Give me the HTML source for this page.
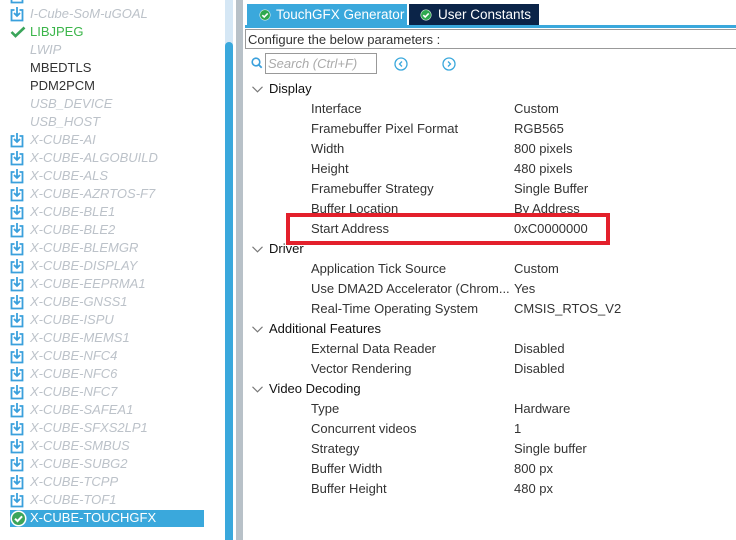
<!DOCTYPE html>
<html><head><meta charset="utf-8"><style>
*{margin:0;padding:0;box-sizing:border-box}
body{width:736px;height:540px;overflow:hidden;background:#fff;font-family:"Liberation Sans",Arial,sans-serif;font-size:13px;position:relative}
.l{position:absolute;left:0;top:0;width:225px;height:540px;background:#fff}
.it{position:absolute;left:30px;height:18px;line-height:18px;white-space:nowrap}
.g{color:#bcc2c9;font-style:italic}
.k{color:#333}
.ic{position:absolute;left:10px;width:14px;height:16px}
.track{position:absolute;left:225px;top:0;width:8px;height:540px;background:#d5e7f5}
.thumb{position:absolute;left:225px;top:42px;width:8px;height:498px;background:#3aa8dc;border-radius:4px 4px 0 0}
.gs{position:absolute;left:236px;top:0;width:7px;height:540px;background:#b8c1c8}
.t{position:absolute;white-space:nowrap;color:#333;height:20px;line-height:20px}
</style></head><body>
<div class="l">
<svg width="0" height="0" style="position:absolute"><defs><symbol id="dl" viewBox="0 0 14 16"><path d="M4.5 4H1.5v10.5h11V4h-3" fill="none" stroke="#3aa0dc" stroke-width="1.8"/><path d="M7 1v9M4 7l3 3 3-3" fill="none" stroke="#3aa0dc" stroke-width="1.8"/></symbol></defs></svg>
<div id="list"></div>
</div>
<div class="track"></div><div class="thumb"></div><div class="gs"></div>

<div style="position:absolute;left:247px;top:4px;width:160px;height:21px;background:#3aa8dc;color:#fff;font-size:13.5px;line-height:21px;padding-left:29px;white-space:nowrap;overflow:hidden">TouchGFX Generator</div>
<div style="position:absolute;left:409px;top:4px;width:130px;height:21px;background:#0b2448;color:#fff;font-size:13.5px;line-height:21px;padding-left:29px;white-space:nowrap;overflow:hidden">User Constants</div>
<svg style="position:absolute;left:259px;top:9px" width="12" height="12"><circle cx="6" cy="6" r="5.5" fill="#e4f3e8"/><circle cx="6" cy="6" r="5" fill="#2ea84f"/><path d="M3.3 6.2l1.9 1.8 3.5-3.6" stroke="#fff" stroke-width="1.6" fill="none"/></svg>
<svg style="position:absolute;left:420px;top:9px" width="12" height="12"><circle cx="6" cy="6" r="5.5" fill="#e4f3e8"/><circle cx="6" cy="6" r="5" fill="#2ea84f"/><path d="M3.3 6.2l1.9 1.8 3.5-3.6" stroke="#fff" stroke-width="1.6" fill="none"/></svg>
<div style="position:absolute;left:245px;top:25px;width:491px;height:3px;background:#3aa8dc"></div>
<div style="position:absolute;left:245px;top:29px;width:491px;height:20px;border-top:1px solid #999;border-bottom:1px solid #999;border-left:1px solid #999"></div>
<div class="t" style="left:248px;top:30px;color:#333;height:19px;line-height:19px">Configure the below parameters :</div>

<svg style="position:absolute;left:251px;top:57px" width="12" height="12"><circle cx="5" cy="5" r="3.8" fill="none" stroke="#3aa0dc" stroke-width="1.6"/><path d="M7.7 7.7l3 3" stroke="#3aa0dc" stroke-width="1.8"/></svg>
<div style="position:absolute;left:265px;top:53px;width:112px;height:21px;border:1px solid #999;color:#aaa;font-style:italic;line-height:19px;padding-left:2px">Search (Ctrl+F)</div>
<svg style="position:absolute;left:394px;top:57px" width="14" height="14"><circle cx="7" cy="7" r="6" fill="none" stroke="#3aa8dc" stroke-width="1.3"/><path d="M8 4.5L5.5 7 8 9.5" fill="none" stroke="#3aa8dc" stroke-width="1.3"/></svg>
<svg style="position:absolute;left:442px;top:57px" width="14" height="14"><circle cx="7" cy="7" r="6" fill="none" stroke="#3aa8dc" stroke-width="1.3"/><path d="M6 4.5L8.5 7 6 9.5" fill="none" stroke="#3aa8dc" stroke-width="1.3"/></svg>

<div id="tree"></div>
<div style="position:absolute;left:286px;top:213px;width:324px;height:32px;border:4px solid #e3202b"></div>

<script>
var L=[["X-CUBE-Cloud-BLE",'g',1],["I-Cube-SoM-uGOAL",'g',1],["LIBJPEG",'j',2],["LWIP",'g',0],["MBEDTLS",'k',0],["PDM2PCM",'k',0],["USB_DEVICE",'g',0],["USB_HOST",'g',0]];
"AI ALGOBUILD ALS AZRTOS-F7 BLE1 BLE2 BLEMGR DISPLAY EEPRMA1 GNSS1 ISPU MEMS1 NFC4 NFC6 NFC7 SAFEA1 SFXS2LP1 SMBUS SUBG2 TCPP TOF1".split(" ").forEach(function(n){L.push(["X-CUBE-"+n,'g',1])});
L.push(["X-CUBE-TOUCHGFX",'s',3]);
var h="";
L.forEach(function(r,i){var y=-13+i*18;
if(r[1]=='s')h+='<div style="position:absolute;left:10px;top:'+(y+1)+'px;width:194px;height:17px;background:#3aa8dc"></div>';
var c=r[1]=='j'?'color:#3bb54a':r[1]=='s'?'color:#fff':'';
h+='<div class="it '+(r[1]=='g'?'g':'k')+'" style="top:'+y+'px;'+c+'">'+r[0]+'</div>';
if(r[2]==1)h+='<svg class="ic" style="top:'+(y+1)+'px"><use href="#dl"/></svg>';
if(r[2]==2)h+='<svg style="position:absolute;left:10px;top:'+(y+3)+'px" width="16" height="12"><path d="M1.5 6l4 4 9-8.5" fill="none" stroke="#3ba55a" stroke-width="2.6"/></svg>';
if(r[2]==3)h+='<svg style="position:absolute;left:10px;top:'+(y+1)+'px" width="17" height="17"><circle cx="8.5" cy="8.5" r="8" fill="#fff"/><circle cx="8.5" cy="8.5" r="6.5" fill="#3ba55a"/><path d="M5 8.7l2.5 2.4 4.6-4.8" stroke="#fff" stroke-width="2" fill="none"/></svg>';
});
document.getElementById('list').innerHTML=h;
var T=[["Display"],["Interface","Custom"],["Framebuffer Pixel Format","RGB565"],["Width","800 pixels"],["Height","480 pixels"],["Framebuffer Strategy","Single Buffer"],["Buffer Location","By Address"],["Start Address","0xC0000000"],["Driver"],["Application Tick Source","Custom"],["Use DMA2D Accelerator (Chrom...","Yes"],["Real-Time Operating System","CMSIS_RTOS_V2"],["Additional Features"],["External Data Reader","Disabled"],["Vector Rendering","Disabled"],["Video Decoding"],["Type","Hardware"],["Concurrent videos","1"],["Strategy","Single buffer"],["Buffer Width","800 px"],["Buffer Height","480 px"]];
h="";
T.forEach(function(r,i){var y=79+i*20;
if(r.length==1){h+='<svg style="position:absolute;left:252px;top:'+(y+7)+'px" width="11" height="7"><path d="M0.5 0.8l5 5 5-5" fill="none" stroke="#777" stroke-width="1.1"/></svg><div class="t" style="left:269px;top:'+y+'px;color:#111">'+r[0]+'</div>';}
else h+='<div class="t" style="left:311px;top:'+y+'px">'+r[0]+'</div><div class="t" style="left:514px;top:'+y+'px">'+r[1]+'</div>';});
document.getElementById('tree').innerHTML=h;
</script>
</body></html>
